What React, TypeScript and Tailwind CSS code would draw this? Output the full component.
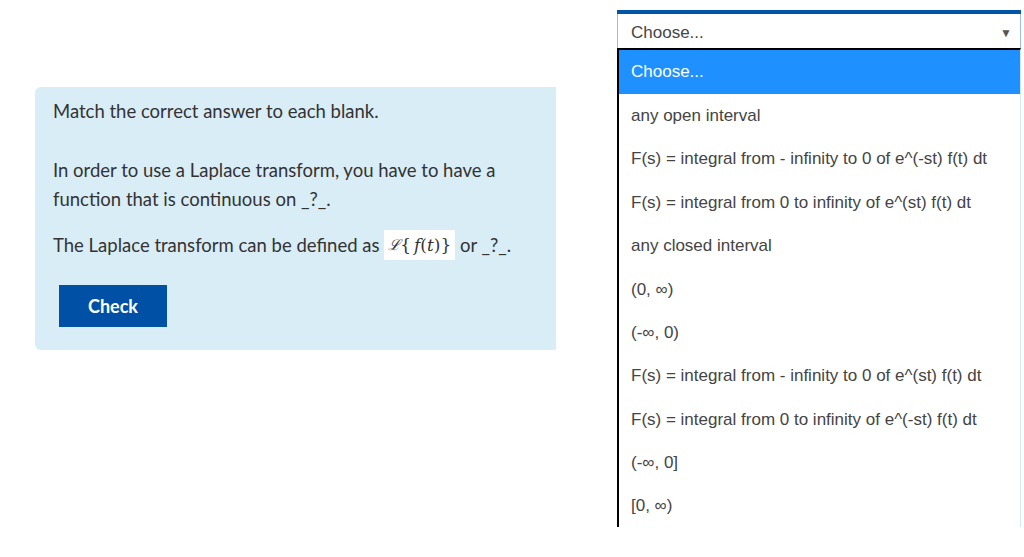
import React from "react";

const options = [
  "any open interval",
  "F(s) = integral from - infinity to 0 of e^(-st) f(t) dt",
  "F(s) = integral from 0 to infinity of e^(st) f(t) dt",
  "any closed interval",
  "(0, ∞)",
  "(-∞, 0)",
  "F(s) = integral from - infinity to 0 of e^(st) f(t) dt",
  "F(s) = integral from 0 to infinity of e^(-st) f(t) dt",
  "(-∞, 0]",
  "[0, ∞)",
];

export default function App() {
  return (
    <div className="w-[1024px] h-[557px] bg-white flex overflow-hidden">
      <div className="pl-[35px] pt-[87px] w-[556px] shrink-0">
        <div
          className="bg-[#d9edf7] rounded-l-[6px] h-[263px] pl-[18px] pt-[10px] text-[#333333] text-[18.5px] leading-[29px]"
          style={{ fontFamily: "Lato, 'Open Sans', sans-serif" }}
        >
          <p>Match the correct answer to each blank.</p>
          <p className="mt-[30px]">
            In order to use a Laplace transform, you have to have a
            <br />
            function that is continuous on _?_.
          </p>
          <p className="mt-[16px] flex items-center">
            <span>The Laplace transform can be defined as&nbsp;</span>
            <span
              className="bg-white h-[30px] px-[4px] flex items-center text-[17px] text-[#333]"
              style={{ fontFamily: "'DejaVu Serif', 'Liberation Serif', serif" }}
            >
              <span className="italic text-[15px]">ℒ</span>
              <span>{"{"}</span>
              <span className="italic ml-[3px]">f</span>
              <span>(</span>
              <span className="italic">t</span>
              <span>)</span>
              <span>{"}"}</span>
            </span>
            <span>&nbsp;or _?_.</span>
          </p>
          <button
            className="mt-[25px] ml-[6px] w-[108px] h-[42px] bg-[#0051a5] text-white font-bold text-[18px] flex items-center justify-center"
            style={{ fontFamily: "Lato, 'Open Sans', sans-serif" }}
          >
            Check
          </button>
        </div>
      </div>
      <div
        className="ml-[61px] pt-[10px] w-[404px] shrink-0 flex flex-col"
        style={{ fontFamily: "'Liberation Sans', Arial, sans-serif" }}
      >
        <div className="h-[4px] bg-[#0055a6]" />
        <div className="h-[34px] border-x border-[#9dbde6] bg-white flex items-center justify-between pl-[13px] pr-[8px] pt-[4px] text-[17px] text-[#444444]">
          <span>Choose...</span>
          <span className="text-[12px] text-[#555]">▼</span>
        </div>
        <div className="border-t-2 border-l-2 border-black border-r border-r-[#d6e9f6] h-[479px] w-[404px]">
          <div className="h-[44px] bg-[#1e90ff] text-white flex items-center pl-[12px] text-[17px]">
            Choose...
          </div>
          {options.map((o, i) => (
            <div
              key={i}
              className="h-[43.4px] flex items-center pl-[12px] text-[17px] text-[#444444]"
            >
              {o}
            </div>
          ))}
        </div>
      </div>
    </div>
  );
}
